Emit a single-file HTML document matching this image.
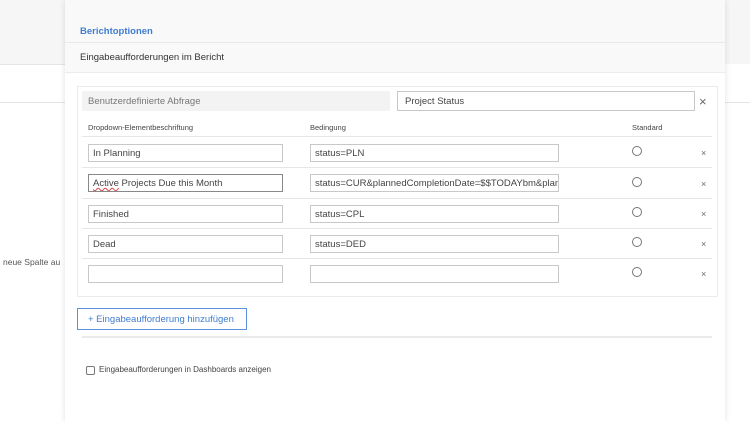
<!DOCTYPE html>
<html><head><style>
*{box-sizing:border-box;margin:0;padding:0}
body{width:750px;height:422px;overflow:hidden;background:#fff;font-family:"Liberation Sans",sans-serif;position:relative;color:#333}
.a{position:absolute}
.inp{position:absolute;border:1px solid #c8c8c8;background:#fff;font-size:9.5px;padding-left:4px;padding-top:1px;line-height:16px;height:18px;color:#444;white-space:nowrap;overflow:hidden}
.rad{position:absolute;width:10px;height:10px;border:1px solid #777;border-radius:50%}
.x{position:absolute;font-size:9px;color:#666}
.sep{position:absolute;left:82px;width:630px;height:1px;background:#e6e6e6}
</style></head><body>
<div class="a" style="left:0;top:0;width:750px;height:64px;background:#f6f6f6"></div>
<div class="a" style="left:0;top:64px;width:65px;height:1px;background:#e5e5e5"></div>
<div class="a" style="left:0;top:102px;width:65px;height:1px;background:#e5e5e5"></div>
<div class="a" style="left:725px;top:102px;width:25px;height:1px;background:#e5e5e5"></div>
<div class="a" style="left:3px;top:257px;font-size:8.5px;color:#555">neue Spalte au</div>
<div class="a" style="left:65px;top:0;width:660px;height:422px;background:#fff;box-shadow:0 0 6px rgba(0,0,0,.12)"></div>
<div class="a" style="left:65px;top:0;width:660px;height:72px;background:#f9f9f9"></div>
<div class="a" style="left:65px;top:42px;width:660px;height:1px;background:#e8e8e8"></div>
<div class="a" style="left:65px;top:72px;width:660px;height:1px;background:#ececec"></div>
<div class="a" style="left:80px;top:26px;font-size:9.5px;font-weight:bold;color:#3f7dd0">Berichtoptionen</div>
<div class="a" style="left:80px;top:52px;font-size:9.5px;color:#333">Eingabeaufforderungen im Bericht</div>
<div class="a" style="left:77px;top:86px;width:641px;height:211px;border:1px solid #ebebeb"></div>
<div class="a" style="left:82px;top:91px;width:308px;height:20px;background:#f3f3f3;font-size:9.5px;color:#777;padding:5px 6px">Benutzerdefinierte Abfrage</div>
<div class="inp" style="left:397px;top:91px;width:298px;height:20px;line-height:18px;padding-left:7px">Project Status</div>
<div class="x" style="left:699px;top:94px;font-size:13px">×</div>
<div class="a" style="left:88px;top:123px;font-size:7.5px;color:#444">Dropdown-Elementbeschriftung</div>
<div class="a" style="left:310px;top:123px;font-size:7.5px;color:#444">Bedingung</div>
<div class="a" style="left:632px;top:123px;font-size:7.5px;color:#444">Standard</div>
<div class="sep" style="top:136px"></div>
<div class="inp" style="left:88px;top:144px;width:195px">In Planning</div>
<div class="inp" style="left:310px;top:144px;width:249px">status=PLN</div>
<div class="rad" style="left:632px;top:146px"></div><div class="x" style="left:701px;top:148px">×</div>
<div class="sep" style="top:167px"></div>
<div class="inp" style="left:88px;top:174px;width:195px;border-color:#888"><span style="text-decoration:underline wavy #d44;text-decoration-thickness:1px">Active</span> Projects Due this Month</div>
<div class="inp" style="left:310px;top:174px;width:249px">status=CUR&amp;plannedCompletionDate=$$TODAYbm&amp;plan</div>
<div class="rad" style="left:632px;top:177px"></div><div class="x" style="left:701px;top:179px">×</div>
<div class="sep" style="top:198px"></div>
<div class="inp" style="left:88px;top:205px;width:195px">Finished</div>
<div class="inp" style="left:310px;top:205px;width:249px">status=CPL</div>
<div class="rad" style="left:632px;top:207px"></div><div class="x" style="left:701px;top:209px">×</div>
<div class="sep" style="top:228px"></div>
<div class="inp" style="left:88px;top:235px;width:195px">Dead</div>
<div class="inp" style="left:310px;top:235px;width:249px">status=DED</div>
<div class="rad" style="left:632px;top:237px"></div><div class="x" style="left:701px;top:239px">×</div>
<div class="sep" style="top:258px"></div>
<div class="inp" style="left:88px;top:265px;width:195px"></div>
<div class="inp" style="left:310px;top:265px;width:249px"></div>
<div class="rad" style="left:632px;top:267px"></div><div class="x" style="left:701px;top:269px">×</div>
<div class="a" style="left:77px;top:308px;width:170px;height:22px;border:1px solid #5b93dc;color:#3f7dd0;font-size:9.5px;padding:5px 10px">+ Eingabeaufforderung hinzufügen</div>
<div class="a" style="left:82px;top:336px;width:630px;height:2px;background:#eaeaea"></div>
<div class="a" style="left:86px;top:366px;width:9px;height:9px;border:1px solid #777;border-radius:2px"></div>
<div class="a" style="left:99px;top:365px;font-size:8px;color:#444">Eingabeaufforderungen in Dashboards anzeigen</div>
</body></html>
